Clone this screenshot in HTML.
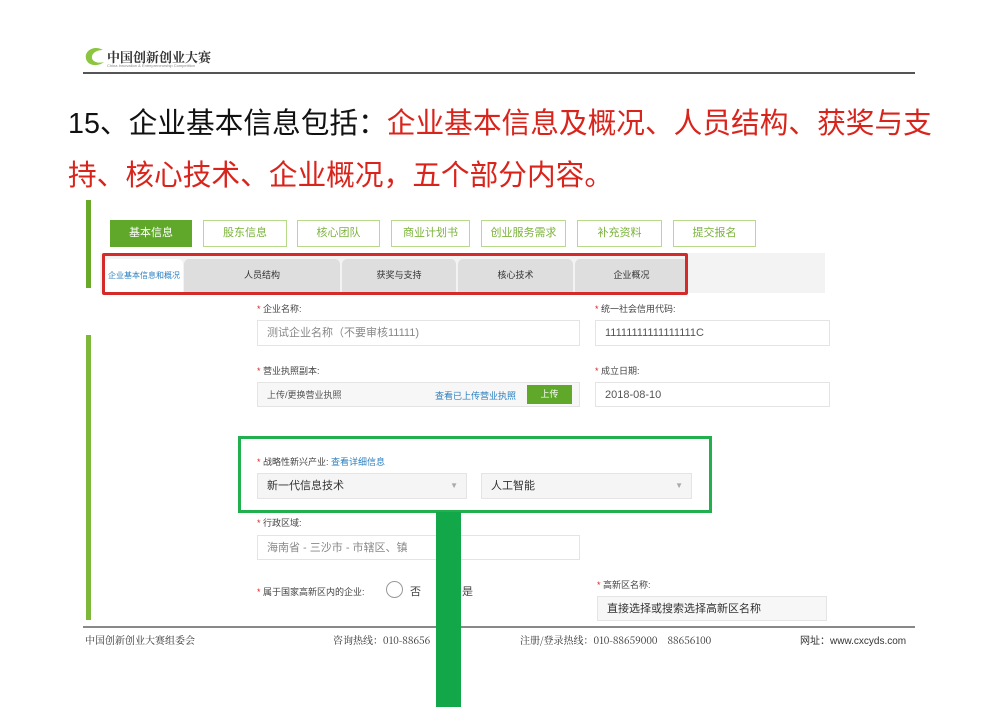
<!DOCTYPE html>
<html><head><meta charset="utf-8"><style>
*{margin:0;padding:0;box-sizing:border-box}
body{width:1000px;height:707px;background:#fff;position:relative;overflow:hidden;font-family:"Liberation Sans","Noto Sans CJK SC",sans-serif}
.a{position:absolute;white-space:nowrap}
.t{font-size:28.7px;color:#111}
.r{color:#d9241c}
.btn{position:absolute;top:220px;height:27px;border:1px solid #b8d98a;color:#7bb33a;font-size:11px;text-align:center;line-height:25px;background:#fff;white-space:nowrap}
.sub{position:absolute;top:259px;height:33px;background:#dedede;font-size:9px;color:#333;text-align:center;line-height:33px;border-radius:5px 5px 0 0;white-space:nowrap;overflow:hidden}
.lbl{position:absolute;font-size:9px;color:#444;white-space:nowrap}
.lbl:before{content:"* ";color:#d22}
.inp{position:absolute;border:1px solid #e4e4e4;background:#fff;font-size:11px;color:#555;padding-left:9px;line-height:24px;white-space:nowrap}
</style></head><body>
<svg class="a" style="left:83px;top:46px" width="24" height="22" viewBox="0 0 24 22"><path d="M20 4 C12 -1 1 4 3 13 C5 20 15 21 21 16 C14 18 8 15 9 10 C10 6 15 4 20 4Z" fill="#8cc63f"/></svg>
<div class="a" style="left:107px;top:47px;font-size:13px;color:#333;font-family:'Noto Serif CJK SC',serif;font-weight:bold">中国创新创业大赛</div>
<div class="a" style="left:107px;top:63px;font-size:4px;color:#888">China Innovation &amp; Entrepreneurship Competition</div>
<div class="a" style="left:83px;top:72px;width:832px;height:2px;background:#555"></div>
<div class="a t" style="left:68px;top:101px">15、企业基本信息包括：<span class="r">企业基本信息及概况、人员结构、获奖与支</span></div>
<div class="a t r" style="left:68px;top:153px">持、核心技术、企业概况，五个部分内容。</div>
<div class="a" style="left:86px;top:200px;width:5px;height:88px;background:#6aa82a"></div>
<div class="a" style="left:86px;top:335px;width:5px;height:285px;background:#7db83a"></div>
<div class="btn" style="left:110px;width:82px;background:#5fa82a;border-color:#5fa82a;color:#fff">基本信息</div>
<div class="btn" style="left:203px;width:84px">股东信息</div>
<div class="btn" style="left:297px;width:83px">核心团队</div>
<div class="btn" style="left:391px;width:79px">商业计划书</div>
<div class="btn" style="left:481px;width:85px">创业服务需求</div>
<div class="btn" style="left:577px;width:85px">补充资料</div>
<div class="btn" style="left:673px;width:83px">提交报名</div>
<div class="a" style="left:100px;top:253px;width:725px;height:40px;background:#f3f3f3"></div>
<div class="sub" style="left:105px;width:78px;background:#fff;color:#2a7fc0;font-size:8px">企业基本信息和概况</div>
<div class="sub" style="left:184px;width:156px">人员结构</div>
<div class="sub" style="left:342px;width:114px">获奖与支持</div>
<div class="sub" style="left:458px;width:115px">核心技术</div>
<div class="sub" style="left:575px;width:113px">企业概况</div>
<div class="a" style="left:102px;top:253px;width:586px;height:42px;border:3px solid #d42a2a;border-radius:2px"></div>
<div class="lbl" style="left:257px;top:302px">企业名称:</div>
<div class="inp" style="left:257px;top:320px;width:323px;height:26px;color:#888">测试企业名称（不要审核11111)</div>
<div class="lbl" style="left:595px;top:302px">统一社会信用代码:</div>
<div class="inp" style="left:595px;top:320px;width:235px;height:26px">11111111111111111C</div>
<div class="lbl" style="left:257px;top:364px">营业执照副本:</div>
<div class="inp" style="left:257px;top:382px;width:323px;height:25px;font-size:9px;background:#f7f7f7">上传/更换营业执照</div>
<div class="a" style="left:435px;top:389px;font-size:9px;color:#2a7fc0">查看已上传营业执照</div>
<div class="a" style="left:527px;top:385px;width:45px;height:19px;background:#5fa82a;color:#fff;font-size:9px;text-align:center;line-height:19px">上传</div>
<div class="lbl" style="left:595px;top:364px">成立日期:</div>
<div class="inp" style="left:595px;top:382px;width:235px;height:25px">2018-08-10</div>
<div class="a" style="left:238px;top:436px;width:474px;height:77px;border:3px solid #22b04e"></div>
<div class="lbl" style="left:257px;top:455px">战略性新兴产业: <span style="color:#2a7fc0">查看详细信息</span></div>
<div class="inp" style="left:257px;top:473px;width:210px;height:26px;background:#f5f5f5;color:#333">新一代信息技术<span style="position:absolute;right:8px;color:#aaa;font-size:8px">▼</span></div>
<div class="inp" style="left:481px;top:473px;width:211px;height:26px;background:#f5f5f5;color:#333">人工智能<span style="position:absolute;right:8px;color:#aaa;font-size:8px">▼</span></div>
<div class="lbl" style="left:257px;top:516px">行政区域:</div>
<div class="inp" style="left:257px;top:535px;width:323px;height:25px;color:#888">海南省 - 三沙市 - 市辖区、镇</div>
<div class="lbl" style="left:257px;top:585px">属于国家高新区内的企业:</div>
<div class="a" style="left:386px;top:581px;width:17px;height:17px;border:1px solid #999;border-radius:50%"></div>
<div class="a" style="left:410px;top:583px;font-size:11px;color:#444">否</div>
<div class="a" style="left:462px;top:583px;font-size:11px;color:#444">是</div>
<div class="lbl" style="left:597px;top:578px">高新区名称:</div>
<div class="inp" style="left:597px;top:596px;width:230px;height:25px;background:#f7f7f7;color:#333">直接选择或搜索选择高新区名称</div>
<div class="a" style="left:83px;top:626px;width:832px;height:2px;background:#888"></div>
<div class="a" style="left:85px;top:632px;font-size:10px;color:#333;font-family:'Noto Serif CJK SC',serif">中国创新创业大赛组委会</div>
<div class="a" style="left:333px;top:632px;font-size:10px;color:#333;font-family:'Noto Serif CJK SC',serif">咨询热线：010-88656</div>
<div class="a" style="left:520px;top:632px;font-size:10px;color:#333;font-family:'Noto Serif CJK SC',serif">注册/登录热线：010-88659000　88656100</div>
<div class="a" style="left:800px;top:632px;font-size:10px;color:#333">网址：www.cxcyds.com</div>
<div class="a" style="left:436px;top:512px;width:25px;height:195px;background:#12a84a"></div>
</body></html>
